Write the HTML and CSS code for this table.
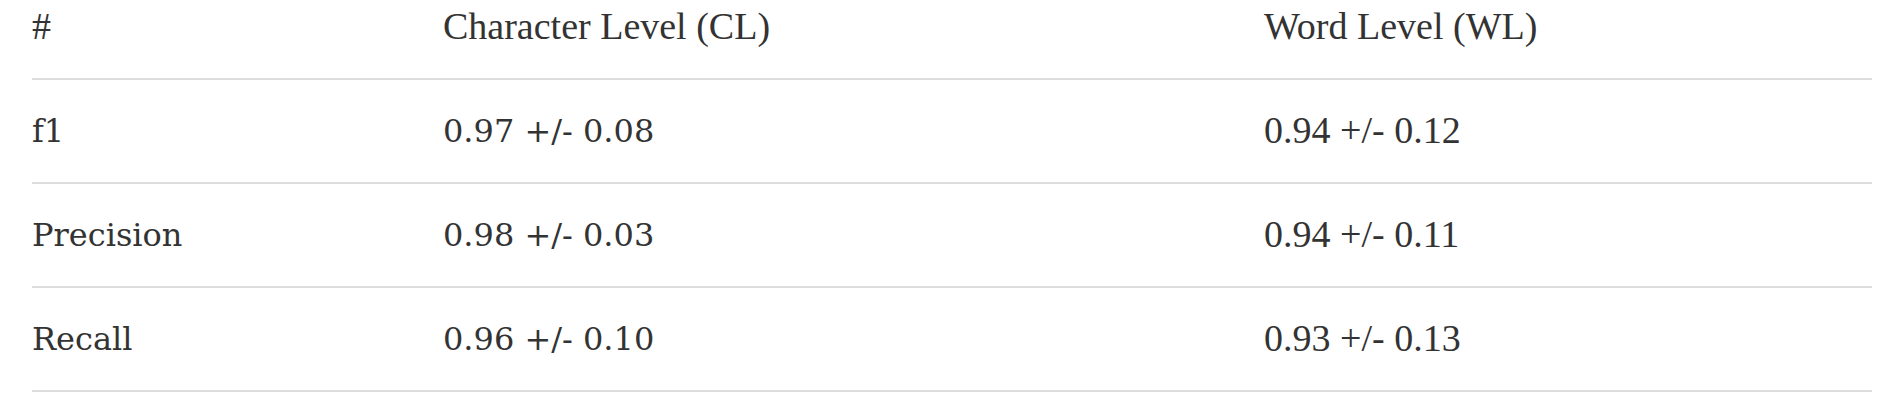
FILE: index.html
```html
<!DOCTYPE html>
<html lang="en">
<head>
<meta charset="utf-8">
<title>Metrics</title>
<link rel="stylesheet" href="styles.css">
</head>
<body>
<div class="page">
  <table class="metrics">
    <colgroup>
      <col class="c-name">
      <col class="c-cl">
      <col class="c-wl">
    </colgroup>
    <thead>
      <tr>
        <th class="head">#</th>
        <th class="head">Character Level (CL)</th>
        <th class="head">Word Level (WL)</th>
      </tr>
    </thead>
    <tbody>
      <tr>
        <td class="cell">f1</td>
        <td class="cell">0.97 +/- 0.08</td>
        <td class="cell alt">0.94 +/- 0.12</td>
      </tr>
      <tr>
        <td class="cell">Precision</td>
        <td class="cell">0.98 +/- 0.03</td>
        <td class="cell alt">0.94 +/- 0.11</td>
      </tr>
      <tr>
        <td class="cell">Recall</td>
        <td class="cell">0.96 +/- 0.10</td>
        <td class="cell alt">0.93 +/- 0.13</td>
      </tr>
    </tbody>
  </table>
</div>
</body>
</html>
```
FILE: styles.css
```css
html, body {
  margin: 0;
  padding: 0;
  background: #ffffff;
}

.page {
  padding: 0 30px 0 32px;
}

.metrics {
  width: 1840px;
  border-collapse: collapse;
  table-layout: fixed;
  color: #333333;
}

.c-name { width: 411px; }
.c-cl { width: 821px; }
.c-wl { width: 608px; }

.head {
  font-family: "Liberation Serif", "Times New Roman", serif;
  font-weight: normal;
  font-size: 38px;
  line-height: 38px;
  text-align: left;
  vertical-align: top;
  padding: 7px 0 33px 0;
  border-bottom: 2px solid #dddddd;
  white-space: nowrap;
}

.cell {
  font-family: "DejaVu Serif", Georgia, serif;
  font-size: 32px;
  line-height: 38px;
  text-align: left;
  vertical-align: top;
  padding: 32px 0 32px 0;
  border-bottom: 2px solid #dddddd;
  white-space: nowrap;
}

.cell.alt {
  font-family: "Liberation Serif", "Times New Roman", serif;
  font-size: 38px;
  padding-top: 31px;
  padding-bottom: 33px;
}
```
